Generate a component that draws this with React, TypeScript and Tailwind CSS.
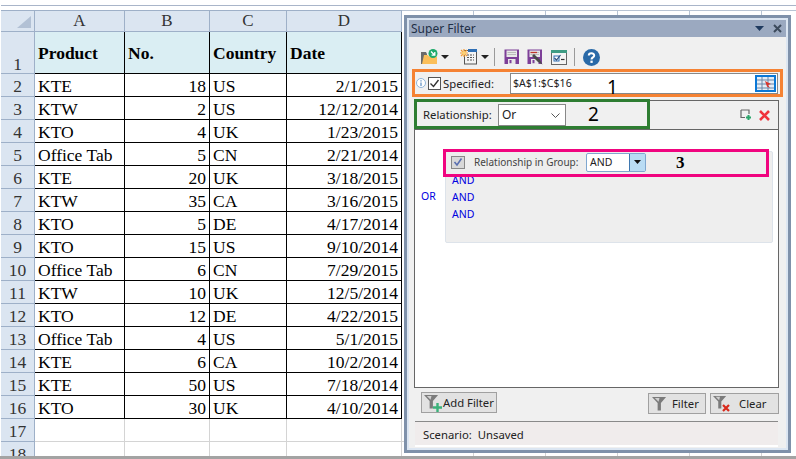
import React from "react";

const rows: [string, string, string, string][] = [
  ["KTE", "18", "US", "2/1/2015"],
  ["KTW", "2", "US", "12/12/2014"],
  ["KTO", "4", "UK", "1/23/2015"],
  ["Office Tab", "5", "CN", "2/21/2014"],
  ["KTE", "20", "UK", "3/18/2015"],
  ["KTW", "35", "CA", "3/16/2015"],
  ["KTO", "5", "DE", "4/17/2014"],
  ["KTO", "15", "US", "9/10/2014"],
  ["Office Tab", "6", "CN", "7/29/2015"],
  ["KTW", "10", "UK", "12/5/2014"],
  ["KTO", "12", "DE", "4/22/2015"],
  ["Office Tab", "4", "US", "5/1/2015"],
  ["KTE", "6", "CA", "10/2/2014"],
  ["KTE", "50", "US", "7/18/2014"],
  ["KTO", "30", "UK", "4/10/2014"],
];

const Tri = () => (
  <svg width="8" height="4" viewBox="0 0 8 4" className="shrink-0">
    <path d="M0 0H8L4 4Z" fill="#222" />
  </svg>
);

const Sep = () => <div className="w-px h-[18px] bg-[#9a9a9a] shrink-0" />;

const FolderIcon = () => (
  <svg width="18" height="16" viewBox="0 0 18 16" className="shrink-0">
    <path d="M0 3H5L6 5V15H0Z" fill="#6b6b6b" />
    <path d="M1 15L3 6H7L8 7.5H16V15Z" fill="#fbbf5a" />
    <circle cx="12" cy="4.5" r="4.5" fill="#1faa6b" />
    <path d="M10 2.5L13.5 6M13.8 3V6.2H10.6" stroke="#fff" strokeWidth="1.3" fill="none" />
  </svg>
);

const NewIcon = () => (
  <svg width="17" height="16" viewBox="0 0 17 16" className="shrink-0">
    <rect x="4.5" y="1.5" width="12" height="13.5" fill="#f4f4f4" stroke="#555" />
    <rect x="8" y="0" width="9" height="3" fill="#2f6fb5" />
    <path d="M7 6H14M7 8.5H14M7 11H14" stroke="#555" strokeWidth="1" strokeDasharray="2 1" />
    <path d="M4 0V8M0 4H8M1 1L7 7M7 1L1 7" stroke="#f59a2f" strokeWidth="1.2" />
    <circle cx="4" cy="4" r="2" fill="#f9d27a" />
  </svg>
);

const SaveIcon = ({ edit }: { edit?: boolean }) => (
  <svg width="16" height="16" viewBox="0 0 16 16" className="shrink-0">
    <rect x="0.5" y="0.5" width="14.5" height="14.5" fill="#7d3f98" />
    <rect x="2.5" y="1.5" width="10.5" height="6.5" fill="#e8e8e8" />
    <path d="M3.5 3.5H12M3.5 5.5H12" stroke="#bbb" />
    <rect x="4" y="10" width="7.5" height="5" fill="#e8e8e8" />
    <rect x="5.5" y="11" width="2" height="3.2" fill="#7d3f98" />
    {edit && (
      <>
        <path d="M3.5 3.5H10" stroke="#c0392b" strokeWidth="1.3" />
        <path d="M7 5L13 11L15.5 15.5L11 13L5 7Z" fill="#4a4a4a" />
      </>
    )}
  </svg>
);

const FormIcon = () => (
  <svg width="16" height="15" viewBox="0 0 16 15" className="shrink-0">
    <rect x="0.5" y="0.5" width="15" height="14" fill="#f4f4f4" stroke="#666" />
    <rect x="0" y="0" width="16" height="3" fill="#3f9c84" />
    <rect x="3" y="6" width="5" height="5" fill="#fff" stroke="#2f6fb5" />
    <path d="M3.5 8L5.5 10L9.5 5" stroke="#2f4f7f" strokeWidth="1.2" fill="none" />
    <path d="M10 9.5H13.5" stroke="#333" strokeWidth="1.2" />
  </svg>
);

const HelpIcon = () => (
  <svg width="17" height="17" viewBox="0 0 17 17" className="shrink-0">
    <circle cx="8.5" cy="8.5" r="8.5" fill="#2a6aa8" />
    <path d="M5.8 6.6C5.8 3.6 11.2 3.6 11.2 6.5C11.2 8.4 8.5 8.3 8.5 10.4" stroke="#fff" strokeWidth="2" fill="none" />
    <rect x="7.4" y="11.6" width="2.3" height="2.3" fill="#fff" />
  </svg>
);

const Funnel = ({ size = 16 }: { size?: number }) => (
  <svg width={size} height={size} viewBox="0 0 16 16" className="shrink-0">
    <path d="M0 1H15L9.5 7.5V15.5H6V7.5Z" fill="#7b7b7b" />
    <path d="M3 2H8L7 6Z" fill="#d0d0d0" />
  </svg>
);

const App = () => (
  <div
    className="relative w-[796px] h-[459px] overflow-hidden bg-white text-black"
    style={{ fontFamily: '"Liberation Serif", serif' }}
  >
    {/* sheet */}
    <div className="flex flex-col h-[456px] overflow-hidden pl-px text-[17.5px] leading-none">
      <div className="h-[5px] shrink-0" />
      <div className="h-px shrink-0 bg-[#a9b5c9]" />
      <div className="h-[4px] shrink-0" />
      {/* column headers */}
      <div className="flex h-[22px] shrink-0">
        <div className="w-[34px] shrink-0 bg-[#dbe5f1] border-r border-b border-t border-[#9eb0c8] relative">
          <div className="absolute right-[3px] bottom-[3px] w-0 h-0 border-l-[14px] border-b-[12px] border-l-transparent border-b-[#b2c1d5]" />
        </div>
        {[
          ["A", "w-[90px]"],
          ["B", "w-[85px]"],
          ["C", "w-[77px]"],
          ["D", "w-[115px]"],
        ].map(([h, w]) => (
          <div
            key={h}
            className={`${w} shrink-0 bg-[#dbe5f1] border-r border-b border-t border-[#9eb0c8] flex items-center justify-center pb-[2px] text-[#333] text-[17px]`}
          >
            {h}
          </div>
        ))}
        {[0, 1, 2, 3, 4, 5].map((i) => (
          <div key={i} className="w-[72px] shrink-0 h-[5px] border-r border-t border-[#b8c4d4]" />
        ))}
      </div>
      {/* row 1 */}
      <div className="flex h-[42px] shrink-0">
        <div className="w-[34px] shrink-0 bg-[#dbe5f1] border-r border-b border-[#9eb0c8] flex items-end justify-center text-[#333]">
          1
        </div>
        {[
          ["Product", "w-[90px]"],
          ["No.", "w-[85px]"],
          ["Country", "w-[77px]"],
          ["Date", "w-[115px]"],
        ].map(([h, w]) => (
          <div
            key={h}
            className={`${w} shrink-0 bg-[#daeef3] border-r border-b border-black flex items-center pl-[3px] pt-[2px] font-bold`}
          >
            {h}
          </div>
        ))}
      </div>
      {rows.map((r, i) => (
        <div key={i} className="flex h-[23px] shrink-0">
          <div className="w-[34px] shrink-0 bg-[#dbe5f1] border-r border-b border-[#9eb0c8] flex items-end justify-center pb-px text-[#333]">
            {i + 2}
          </div>
          <div className="w-[90px] shrink-0 border-r border-b border-black flex items-center pl-[3px] pt-[4px]">{r[0]}</div>
          <div className="w-[85px] shrink-0 border-r border-b border-black flex items-center justify-end pr-[3px] pt-[4px]">{r[1]}</div>
          <div className="w-[77px] shrink-0 border-r border-b border-black flex items-center pl-[3px] pt-[4px]">{r[2]}</div>
          <div className="w-[115px] shrink-0 border-r border-b border-black flex items-center justify-end pr-[3px] pt-[4px]">{r[3]}</div>
        </div>
      ))}
      {[17, 18].map((n) => (
        <div key={n} className="flex h-[23px] shrink-0">
          <div className="w-[34px] shrink-0 bg-[#dbe5f1] border-r border-b border-[#9eb0c8] flex items-end justify-center pb-px text-[#333]">
            {n}
          </div>
          {["w-[90px]", "w-[85px]", "w-[77px]", "w-[115px]", "w-[72px]", "w-[72px]", "w-[72px]", "w-[72px]", "w-[72px]"].map((w, i) => (
            <div key={i} className={`${w} shrink-0 border-r border-b border-[#d4d4d4]`} />
          ))}
        </div>
      ))}
    </div>
    <div className="h-[3px] bg-[#a3a3a3]" />

    {/* floating pane */}
    <div
      className="absolute left-[404px] top-[15px] w-[387px] h-[438px] border-[3px] border-[#7f91aa] bg-[#dce6f2] p-[2px] flex flex-col text-[11.3px] leading-none text-[#222]"
      style={{ fontFamily: '"Noto Sans", sans-serif' }}
    >
      <div className="h-[17px] shrink-0 bg-[#9ba9c0] flex items-center justify-between pl-[2px] pr-[4px] text-[12px] text-[#1f2f46]">
        <span>Super Filter</span>
        <span className="flex items-center gap-[9px]">
          <svg width="9" height="5" viewBox="0 0 9 5"><path d="M0 0H9L4.5 5Z" fill="#1f3a5f" /></svg>
          <svg width="9" height="9" viewBox="0 0 9 9"><path d="M1 1L8 8M8 1L1 8" stroke="#3c4a5c" strokeWidth="2" /></svg>
        </span>
      </div>
      <div className="flex-1 bg-[#f0f0f0] flex flex-col min-h-0">
        {/* toolbar */}
        <div className="h-[32px] shrink-0 flex items-center pl-[12px] pt-[8px]">
          <FolderIcon />
          <div className="w-[2px]" />
          <Tri />
          <div className="w-[11px]" />
          <NewIcon />
          <div className="w-[4px]" />
          <Tri />
          <div className="w-[5px]" />
          <Sep />
          <div className="w-[9px]" />
          <SaveIcon />
          <div className="w-[7px]" />
          <SaveIcon edit />
          <div className="w-[8px]" />
          <FormIcon />
          <div className="w-[7px]" />
          <Sep />
          <div className="w-[8px]" />
          <HelpIcon />
        </div>
        {/* specified */}
        <div className="ml-[3px] w-[371px] h-[28px] shrink-0 border-[3px] border-[#f58233] flex items-center pl-[1px]">
          <svg width="10" height="10" viewBox="0 0 10 10" className="shrink-0">
            <circle cx="5" cy="5" r="4.5" fill="#fff" stroke="#8fb4d9" />
            <path d="M5 2.2V3.4M5 4.4V8" stroke="#5b8cc0" strokeWidth="1.2" />
          </svg>
          <div className="w-[13px] h-[13px] ml-[2px] shrink-0 border border-[#555] bg-white flex items-center justify-center">
            <svg width="11" height="11" viewBox="0 0 11 11"><path d="M1.5 5.5L4.5 8.5L9.5 2" stroke="#333" strokeWidth="1.4" fill="none" /></svg>
          </div>
          <span className="ml-[2px] w-[67px] shrink-0 pt-px">Specified:</span>
          <div className="w-[268px] h-[21px] shrink-0 border border-[#888] bg-white flex items-center justify-between pl-[2px] pr-px">
            <span className="text-[10.6px]">$A$1:$C$16</span>
            <div className="w-[21px] h-[17px] border-2 border-[#0a78d7] bg-[#e4edf6] flex items-center justify-center">
              <svg width="17" height="13" viewBox="0 0 17 13">
                <path d="M0 3H17M0 7H17M0 11H17M5 0V13M11 0V13" stroke="#6a87a8" strokeWidth="1" />
                <path d="M8 4L14 7L11 8L13 11L10 9.5Z" fill="#d9342b" />
              </svg>
            </div>
          </div>
        </div>
        {/* relationship panel */}
        <div className="relative mt-[3px] ml-[5px] w-[365px] h-[288px] shrink-0 border border-[#666] flex flex-col">
          <div className="h-[29px] shrink-0 flex items-center justify-between pl-[8px] pr-[8px] border-b border-[#666]">
            <div className="flex items-center gap-[6px]">
              <span className="w-[69px]">Relationship:</span>
              <div className="w-[68px] h-[22px] border border-[#888] bg-white flex items-center justify-between pl-[3px] pr-[5px] text-[12px]">
                <span>Or</span>
                <svg width="9" height="5" viewBox="0 0 9 5"><path d="M0.5 0.5L4.5 4.5L8.5 0.5" stroke="#555" fill="none" /></svg>
              </div>
            </div>
            <div className="flex items-center gap-[7px]">
              <svg width="12" height="12" viewBox="0 0 12 12">
                <path d="M1 1H9V5M5 8.5H1V1" stroke="#666" strokeWidth="1.2" fill="none" />
                <path d="M6 8.5H11M8.5 6V11" stroke="#2aa56b" strokeWidth="2" />
              </svg>
              <svg width="11" height="11" viewBox="0 0 11 11"><path d="M1 1L10 10M10 1L1 10" stroke="#f0323c" strokeWidth="2.6" /></svg>
            </div>
          </div>
          <div className="flex-1 bg-white flex items-start pt-[21px] pl-[6px]">
            <div className="h-[91px] flex items-center w-[24px] shrink-0 text-[10.5px] text-[#0000e0]">OR</div>
            <div className="relative w-[328px] h-[92px] bg-[#eeeeee] border border-[#dde3ea] rounded-[2px] flex flex-col">
              <div className="h-[20px] shrink-0 flex items-center pl-[5px] text-[10px] text-[#444]">
                <div className="w-[14px] h-[13px] border border-[#888] bg-[#d8d8d8] flex items-center justify-center shrink-0">
                  <svg width="10" height="10" viewBox="0 0 10 10"><path d="M1.5 5L4 8L8.5 1.5" stroke="#5a6fb0" strokeWidth="1.6" fill="none" /></svg>
                </div>
                <span className="ml-[9px] w-[112px] shrink-0">Relationship in Group:</span>
                <div className="w-[60px] h-[19px] border border-[#7fa7cf] rounded-[2px] bg-white flex justify-between items-stretch shrink-0 text-[10.5px]">
                  <span className="pl-[3px] self-center text-[#222]">AND</span>
                  <div className="w-[16px] bg-[#b9dcf4] border-l border-[#3f78b0] flex items-center justify-center">
                    <svg width="7" height="4" viewBox="0 0 7 4"><path d="M0 0H7L3.5 4Z" fill="#111" /></svg>
                  </div>
                </div>
                <span className="ml-[30px] text-[17px] font-bold text-black" style={{ fontFamily: '"Liberation Serif", serif' }}>3</span>
              </div>
              <div className="flex flex-col pl-[6px] text-[10.5px] text-[#0000e0]">
                <div className="h-[17px] flex items-center">AND</div>
                <div className="h-[17px] flex items-center">AND</div>
                <div className="h-[17px] flex items-center">AND</div>
              </div>
              <div className="absolute -left-[3px] -top-[3px] w-[326px] h-[28px] border-[3px] border-[#f0047f]" />
            </div>
          </div>
          {/* annotation frame */}
          <div className="absolute -left-px -top-[2px] w-[236px] h-[30px] border-[3px] border-[#2e7d32]" />
          <span className="absolute left-[173px] top-[4px] text-[19px] text-black">2</span>
        </div>
        {/* buttons */}
        <div className="h-[33px] shrink-0 flex items-start justify-between pl-[12px] pr-[7px] pt-[4px]">
          <div className="w-[76px] h-[21px] border border-[#a0a0a0] bg-[#e2e2e2] flex items-center pl-[2px] gap-[1px] whitespace-nowrap">
            <span className="relative w-[18px] h-[18px] shrink-0">
              <Funnel size={15} />
              <svg width="9" height="9" viewBox="0 0 9 9" className="absolute right-0 bottom-0"><path d="M0 4.5H9M4.5 0V9" stroke="#3bb27a" strokeWidth="2.4" /></svg>
            </span>
            <span>Add Filter</span>
          </div>
          <div className="flex items-center gap-[4px] mt-[1px]">
            <div className="w-[58px] h-[21px] border border-[#a0a0a0] bg-[#e2e2e2] flex items-center pl-[3px]">
              <Funnel size={15} />
              <span className="ml-[5px]">Filter</span>
            </div>
            <div className="w-[69px] h-[21px] border border-[#a0a0a0] bg-[#e2e2e2] flex items-center pl-[2px]">
              <span className="relative w-[17px] h-[17px] shrink-0">
                <Funnel size={14} />
                <svg width="8" height="8" viewBox="0 0 8 8" className="absolute right-0 bottom-0"><path d="M1 1L7 7M7 1L1 7" stroke="#d92a1c" strokeWidth="2.2" /></svg>
              </span>
              <span className="ml-[9px]">Clear</span>
            </div>
          </div>
        </div>
        {/* status */}
        <div className="ml-[6px] w-[363px] h-[26px] shrink-0 border-t border-[#8a8a8a] border-b-2 border-b-white bg-[#f0ecec] flex items-center pl-[8px] pt-[3px]">
          <span>Scenario:</span>
          <span className="ml-[6px]">Unsaved</span>
        </div>
      </div>
      <span className="absolute left-[200px] top-[60px] text-[19px] text-black">1</span>
    </div>
  </div>
);

export default App;
